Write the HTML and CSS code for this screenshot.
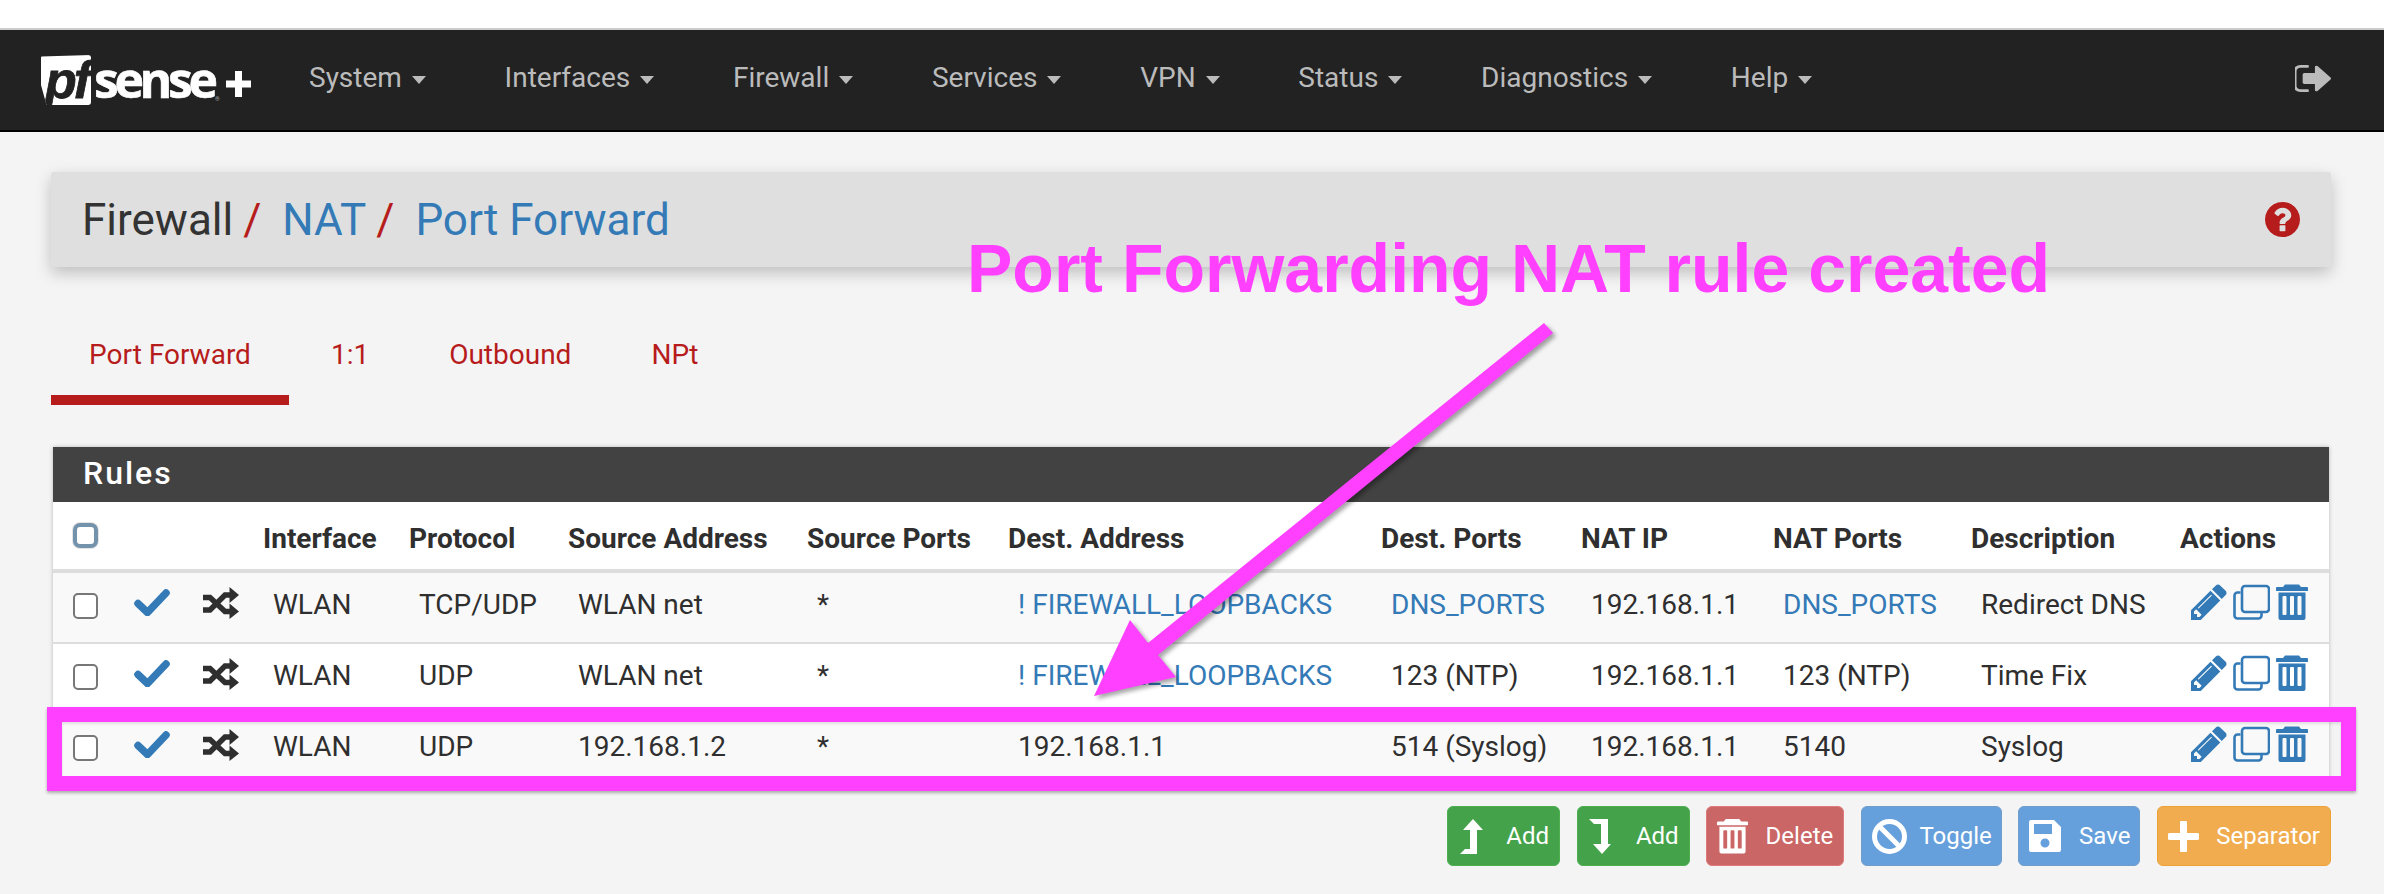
FILE: index.html
```html
<!DOCTYPE html>
<html lang="en">
<head>
<meta charset="utf-8">
<title>Firewall / NAT / Port Forward</title>
<link rel="stylesheet" href="styles.css">
</head>
<body>
<svg width="0" height="0" class="defs">
  <symbol id="i-shuffle" viewBox="0 0 36 32"><path d="M0 10.500h7L22 24.500h6M0 23h7L22 8h6" fill="none" stroke="currentColor" stroke-width="5.500"/><path d="M26.500 0l9.500 8-9.500 8zM26.500 16.500l9.500 8-9.500 7.500z" fill="currentColor"/></symbol>
  <symbol id="i-pencil" viewBox="128 128 1536 1536"><path d="M491 1536l91-91-235-235-91 91v107h128v128h107zm523-928q0-22-22-22-10 0-17 7l-542 542q-7 7-7 17 0 22 22 22 10 0 17-7l542-542q7-7 7-17zm-54-192l416 416-832 832h-416v-416zm683 96q0 53-37 90l-166 166-416-416 166-165q36-38 90-38 53 0 91 38l235 234q37 39 37 91z"/></symbol>
  <symbol id="i-trash" viewBox="0 0 32 36"><path fill-rule="evenodd" d="M9 0.500h14l2 2.500h6a1 1 0 0 1 1 1v2.500a.5.5 0 0 1-.5.5h-31a.5.5 0 0 1-.5-.5v-2.500a1 1 0 0 1 1-1h6zM2.500 8.500h27v25.500a2 2 0 0 1-2 2h-23a2 2 0 0 1-2-2zM6.500 13v17a1 1 0 0 0 1 1h2a1 1 0 0 0 1-1v-17a1 1 0 0 0-1-1h-2a1 1 0 0 0-1 1zM14 13v17a1 1 0 0 0 1 1h2a1 1 0 0 0 1-1v-17a1 1 0 0 0-1-1h-2a1 1 0 0 0-1 1zM21.500 13v17a1 1 0 0 0 1 1h2a1 1 0 0 0 1-1v-17a1 1 0 0 0-1-1h-2a1 1 0 0 0-1 1z"/></symbol>
  <symbol id="i-clone" viewBox="0 0 37 36"><path d="M12 2h21a3 3 0 0 1 3 3v20a3 3 0 0 1-3 3h-21a3 3 0 0 1-3-3v-20a3 3 0 0 1 3-3z" fill="none" stroke="currentColor" stroke-width="2.6"/><path d="M7.500 8.500h-3a3 3 0 0 0-3 3v20a3 3 0 0 0 3 3h21a3 3 0 0 0 3-3v-2.500" fill="none" stroke="currentColor" stroke-width="2.600"/></symbol>
  <symbol id="i-check" viewBox="0 0 36 27"><path d="M4 14.500l9.500 9L32 4" fill="none" stroke="currentColor" stroke-width="7.500" stroke-linejoin="round" stroke-linecap="round"/></symbol>
</svg>

<div class="topstrip"></div>

<nav class="navbar">
  <a class="logo" href="#">
    <span class="logo-pf">pf</span><span class="logo-sense">sense</span><span class="logo-reg">®</span>
    <svg class="logo-plus" viewBox="0 0 25 26"><path d="M9 0h7v9.500h9v7h-9v9.500h-7v-9.500h-9v-7h9z"/></svg>
  </a>
  <ul class="menu">
    <li class="menu-item">System<span class="caret"></span></li>
    <li class="menu-item">Interfaces<span class="caret"></span></li>
    <li class="menu-item">Firewall<span class="caret"></span></li>
    <li class="menu-item">Services<span class="caret"></span></li>
    <li class="menu-item">VPN<span class="caret"></span></li>
    <li class="menu-item">Status<span class="caret"></span></li>
    <li class="menu-item">Diagnostics<span class="caret"></span></li>
    <li class="menu-item">Help<span class="caret"></span></li>
  </ul>
  <svg class="logout" viewBox="128 256 1504 1280" preserveAspectRatio="none"><path d="M704 1440q0 4 1 20t.5 26.500-3 23.500-10 19.500-20.500 6.500h-320q-119 0-203.500-84.500t-84.500-203.500v-704q0-119 84.500-203.500t203.500-84.500h320q13 0 22.500 9.500t9.500 22.500q0 4 1 20t.5 26.500-3 23.500-10 19.500-20.500 6.500h-320q-66 0-113 47t-47 113v704q0 66 47 113t113 47h312l11.500 1 11.500 3 8 5.500 7 9 2 13.500zm928-544q0 26-19 45l-544 544q-19 19-45 19t-45-19-19-45v-288h-448q-26 0-45-19t-19-45v-384q0-26 19-45t45-19h448v-288q0-26 19-45t45-19 45 19l544 544q19 19 19 45z"/></svg>
</nav>

<main class="content">
  <header class="crumbs">
    <h1 class="crumb-line">
      <span>Firewall</span><span class="crumb-sep">/</span>
      <a class="crumb-link" href="#">NAT</a><span class="crumb-sep">/</span>
      <a class="crumb-link" href="#">Port Forward</a>
    </h1>
    <svg class="help" viewBox="128 128 1536 1536"><path d="M1024 1376v-192q0-14-9-23t-23-9h-192q-14 0-23 9t-9 23v192q0 14 9 23t23 9h192q14 0 23-9t9-23zm256-672q0-88-55.500-163t-138.500-116-170-41q-243 0-371 213-15 24 8 42l132 100q7 6 19 6 16 0 25-12 53-68 86-92 34-24 86-24 48 0 85.500 26t37.500 59q0 38-20 61t-68 45q-63 28-115.500 86.500t-52.500 125.500v36q0 14 9 23t23 9h192q14 0 23-9t9-23q0-19 21.500-49.500t54.500-49.500q32-18 49-28.500t46-35 44.500-48 28-60.500 12.500-81zm384 192q0 209-103 385.500t-279.500 279.500-385.500 103-385.500-103-279.500-279.500-103-385.500 103-385.500 279.500-279.500 385.500-103 385.500 103 279.500 279.500 103 385.500z"/></svg>
  </header>

  <ul class="tabs">
    <li class="tab tab-active">Port Forward</li>
    <li class="tab">1:1</li>
    <li class="tab">Outbound</li>
    <li class="tab">NPt</li>
  </ul>

  <section class="panel">
    <h2 class="panel-title">Rules</h2>
    <table class="rules">
      <colgroup>
        <col class="w-cb"><col class="w-chk"><col class="w-shf"><col class="w-if"><col class="w-pr"><col class="w-sa"><col class="w-sp"><col class="w-da"><col class="w-dp"><col class="w-ni"><col class="w-np"><col class="w-de"><col class="w-ac">
      </colgroup>
      <thead>
        <tr>
          <th class="cell-box"><input type="checkbox" class="cb cb-focus" aria-label="Select all"></th>
          <th></th><th></th>
          <th>Interface</th><th>Protocol</th><th>Source Address</th><th>Source Ports</th><th>Dest. Address</th><th>Dest. Ports</th><th>NAT IP</th><th>NAT Ports</th><th>Description</th><th>Actions</th>
        </tr>
      </thead>
      <tbody>
        <tr>
          <td class="cell-box"><input type="checkbox" class="cb" aria-label="Select"></td>
          <td class="cell-check"><svg class="ic-check"><use href="#i-check"/></svg></td>
          <td class="cell-shuffle"><svg class="ic-shuffle"><use href="#i-shuffle"/></svg></td>
          <td>WLAN</td><td>TCP/UDP</td><td>WLAN net</td><td>*</td>
          <td><a href="#">! FIREWALL_LOOPBACKS</a></td>
          <td><a href="#">DNS_PORTS</a></td>
          <td>192.168.1.1</td>
          <td><a href="#">DNS_PORTS</a></td>
          <td>Redirect DNS</td>
          <td class="cell-actions"><div class="actions"><svg class="ic-pencil"><use href="#i-pencil"/></svg><svg class="ic-clone"><use href="#i-clone"/></svg><svg class="ic-trash"><use href="#i-trash"/></svg></div></td>
        </tr>
        <tr>
          <td class="cell-box"><input type="checkbox" class="cb" aria-label="Select"></td>
          <td class="cell-check"><svg class="ic-check"><use href="#i-check"/></svg></td>
          <td class="cell-shuffle"><svg class="ic-shuffle"><use href="#i-shuffle"/></svg></td>
          <td>WLAN</td><td>UDP</td><td>WLAN net</td><td>*</td>
          <td><a href="#">! FIREWALL_LOOPBACKS</a></td>
          <td>123 (NTP)</td>
          <td>192.168.1.1</td>
          <td>123 (NTP)</td>
          <td>Time Fix</td>
          <td class="cell-actions"><div class="actions"><svg class="ic-pencil"><use href="#i-pencil"/></svg><svg class="ic-clone"><use href="#i-clone"/></svg><svg class="ic-trash"><use href="#i-trash"/></svg></div></td>
        </tr>
        <tr>
          <td class="cell-box"><input type="checkbox" class="cb" aria-label="Select"></td>
          <td class="cell-check"><svg class="ic-check"><use href="#i-check"/></svg></td>
          <td class="cell-shuffle"><svg class="ic-shuffle"><use href="#i-shuffle"/></svg></td>
          <td>WLAN</td><td>UDP</td><td>192.168.1.2</td><td>*</td>
          <td>192.168.1.1</td>
          <td>514 (Syslog)</td>
          <td>192.168.1.1</td>
          <td>5140</td>
          <td>Syslog</td>
          <td class="cell-actions"><div class="actions"><svg class="ic-pencil"><use href="#i-pencil"/></svg><svg class="ic-clone"><use href="#i-clone"/></svg><svg class="ic-trash"><use href="#i-trash"/></svg></div></td>
        </tr>
      </tbody>
    </table>
  </section>

  <div class="toolbar">
    <button class="btn btn-green btn-add">
      <svg class="bi-up" viewBox="0 0 28 38"><path d="M15 2l10 11h-6v24h-17l5-5h5v-19h-7z"/></svg>Add</button>
    <button class="btn btn-green btn-add">
      <svg class="bi-down" viewBox="0 0 24 37"><path d="M1 1h19v25h3l-9 10-9-10h8v-20h-7z"/></svg>Add</button>
    <button class="btn btn-red btn-delete">
      <svg class="bi-trash"><use href="#i-trash"/></svg>Delete</button>
    <button class="btn btn-blue btn-toggle">
      <svg class="bi-ban" viewBox="0 0 35 35"><circle cx="17.500" cy="17.500" r="15" fill="none" stroke="currentColor" stroke-width="5"/><path d="M7 7l21 21" stroke="currentColor" stroke-width="5"/></svg>Toggle</button>
    <button class="btn btn-blue btn-save">
      <svg class="bi-save" viewBox="0 0 32 32"><path fill-rule="evenodd" d="M2 0h23l7 7v23a2 2 0 0 1-2 2h-28a2 2 0 0 1-2-2v-28a2 2 0 0 1 2-2zM5 4v10h18v-10zM16 18.500a4.500 4.500 0 1 0 0 9 4.500 4.500 0 0 0 0-9z"/></svg>Save</button>
    <button class="btn btn-orange btn-sep">
      <svg class="bi-plus" viewBox="0 0 31 31"><path d="M12 2a3 3 0 0 1 7 0v10h10a3 3 0 0 1 0 7h-10v10a3 3 0 0 1-7 0v-10h-10a3 3 0 0 1 0-7h10z"/></svg>Separator</button>
  </div>
</main>

<div class="note-box"></div>
<svg class="note-arrow" viewBox="0 0 2384 894"><polygon points="1544,323 1553,333 1158,655 1176,677 1094,696 1130,620 1148,643"/></svg>
<div class="note-title">Port Forwarding NAT rule created</div>
</body>
</html>
```

FILE: styles.css
```css
* { box-sizing: border-box; }
html, body { margin: 0; padding: 0; }
body {
  position: relative;
  height: 894px;
  overflow: hidden;
  background: #f4f4f4;
  color: #2f2f2f;
  font-family: Roboto, "Liberation Sans", sans-serif;
  font-size: 28px;
}
a { color: #337ab7; text-decoration: none; }
ul { list-style: none; margin: 0; padding: 0; }
.defs { position: absolute; }

.topstrip { height: 30px; background: #fff; border-bottom: 2px solid #ccc; }

.navbar {
  display: flex;
  align-items: center;
  height: 102px;
  padding: 0 53px 4px 41px;
  background: #222;
  border-bottom: 2px solid #000;
}
.logo { position: relative; display: flex; align-items: center; width: 210px; height: 50px; flex: none; margin-top: 4px; }
.logo-pf {
  display: block;
  flex: none;
  width: 50px;
  height: 50px;
  background: #fff;
  color: #222;
  font: italic 700 52px/50px "Liberation Sans", sans-serif;
  -webkit-text-stroke: .8px #222;
  letter-spacing: -3px;
  padding-left: 4px;
  border-radius: 3px;
  clip-path: polygon(0 3%, 100% 0, 100% 100%, 11% 100%, 0 60%);
}
.logo-sense {
  margin-left: 3px;
  color: #fff;
  font: 700 50px/50px "Open Sans", sans-serif;
  -webkit-text-stroke: .6px #fff;
  letter-spacing: -4.400px;
  margin-top: -2px;
}
.logo-reg { position: absolute; left: 174px; top: 40px; font-size: 6px; line-height: 8px; color: #aaa; }
.logo-plus { position: absolute; left: 185px; top: 16px; width: 25px; height: 26px; fill: #fff; }

.menu { display: flex; gap: 78.700px; margin-left: 58px; flex: 1; }
.menu-item { display: flex; align-items: center; color: #bbb; font-size: 28px; line-height: 36px; }
.caret {
  width: 0;
  height: 0;
  margin-left: 10px;
  margin-top: 3px;
  border-left: 7.500px solid transparent;
  border-right: 7.500px solid transparent;
  border-top: 8px solid #bbb;
}
.logout { width: 36px; height: 27px; fill: #bbb; flex: none; }

.content { padding: 40px 53px 0 51px; }

.crumbs {
  display: flex;
  align-items: center;
  justify-content: space-between;
  height: 95px;
  padding: 0 31px 0 31px;
  background: #dfdfdf;
  border-radius: 3px;
  box-shadow: 0 6px 16px rgba(0, 0, 0, .22);
}
.crumb-line { margin: 0; font-size: 44px; font-weight: 400; line-height: 50px; white-space: nowrap; color: #333; }
.crumb-sep { color: #b71c1c; margin: 0 3px 0 10px; }
.crumb-link { color: #337ab7; margin-left: 7px; }
.help { width: 35px; height: 35px; fill: #b71c1c; flex: none; }

.tabs { display: flex; gap: 4px; margin-top: 60px; height: 78px; }
.tab {
  height: 78px;
  padding: 0 38px;
  color: #b71c1c;
  font-size: 28px;
  line-height: 56px;
}
.tab-active { border-bottom: 10px solid #b71c1c; }

.panel {
  margin: 42px 2px 0;
  background: #fff;
  box-shadow: 0 0 4px rgba(0, 0, 0, .25);
}
.panel-title {
  margin: 0;
  height: 55px;
  padding-left: 30px;
  background: #424242;
  color: #fff;
  font-size: 32px;
  font-weight: 500;
  letter-spacing: 2px;
  line-height: 52px;
}

.rules { width: 100%; table-layout: fixed; border-collapse: separate; border-spacing: 0; }
.w-cb { width: 71px; } .w-chk { width: 69px; } .w-shf { width: 60px; }
.w-if { width: 146px; } .w-pr { width: 159px; } .w-sa { width: 239px; }
.w-sp { width: 201px; } .w-da { width: 373px; } .w-dp { width: 200px; }
.w-ni { width: 192px; } .w-np { width: 198px; } .w-de { width: 209px; } .w-ac { width: 159px; }

.rules th {
  height: 71px;
  padding: 5px 0 0 10px;
  border-bottom: 4px solid #ddd;
  text-align: left;
  font-size: 28px;
  font-weight: 700;
  color: #2f2f2f;
  white-space: nowrap;
  vertical-align: middle;
}
.rules td {
  height: 71px;
  padding: 13px 0 0 20px;
  border-bottom: 2px solid #ddd;
  line-height: 38px;
  vertical-align: top;
  white-space: nowrap;
  font-size: 28px;
}
.rules tbody tr:nth-child(odd) td { background: #f9f9f9; }

.rules th.cell-box { padding: 0 0 0 20px; }
.rules td.cell-box { padding: 20px 0 0 20px; line-height: 0; }
.rules td.cell-check { padding: 16px 0 0 10px; line-height: 0; }
.rules td.cell-shuffle { padding: 14px 0 0 10px; line-height: 0; }
.rules td.cell-actions { padding: 11px 0 0 21px; line-height: 0; }

.cb {
  appearance: none;
  display: block;
  width: 25px;
  height: 26px;
  margin: 0;
  background: #fff;
  border: 2px solid #777;
  border-radius: 5px;
}
.cb-focus { width: 25px; height: 25px; border: 4px solid #7393ad; border-radius: 7px; box-shadow: 0 0 0 1px #e4e4e4; }

.ic-check { width: 36px; height: 27px; color: #337ab7; }
.ic-shuffle { width: 36px; height: 32px; color: #2f2f2f; }
.actions { display: flex; gap: 6px; color: #337ab7; fill: #337ab7; }
.ic-pencil { width: 36px; height: 36px; }
.ic-clone { width: 37px; height: 36px; }
.ic-trash { width: 32px; height: 36px; }

.toolbar { display: flex; justify-content: flex-end; gap: 16.600px; margin: 20px 0 0; }
.btn {
  display: flex;
  align-items: center;
  justify-content: space-between;
  height: 60px;
  padding: 0 10px;
  border: 1px solid;
  border-radius: 6px;
  color: #fff;
  fill: #fff;
  font-family: Roboto, sans-serif;
  font-size: 24px;
}
.btn-green { background: #44a34a; border-color: #4caf50; }
.btn-red { background: #cb6666; border-color: #e07a7a; }
.btn-blue { background: #66a0dc; border-color: #6f9ecb; }
.btn-orange { background: #f0ac4e; border-color: #eea236; }
.btn-add { width: 113px; padding-right: 10px; }
.btn-delete { width: 138px; }
.btn-toggle { width: 141px; padding-right: 9px; }
.btn-save { width: 122px; padding-right: 9px; }
.btn-sep { width: 174px; }
.bi-up { width: 28px; height: 38px; }
.bi-down { width: 24px; height: 37px; }
.bi-trash { width: 31px; height: 36px; }
.bi-ban { width: 35px; height: 35px; }
.bi-save { width: 32px; height: 32px; }
.bi-plus { width: 31px; height: 31px; }

.note-box {
  position: absolute;
  left: 47px;
  top: 707px;
  width: 2309px;
  height: 84px;
  border: 15px solid #ff40ff;
  box-shadow: 0 2px 3px rgba(0, 0, 0, .3), inset 0 2px 3px rgba(0, 0, 0, .1);
}
.note-arrow {
  position: absolute;
  left: 0;
  top: 0;
  width: 2384px;
  height: 894px;
  fill: #ff40ff;
  filter: drop-shadow(3px 3px 2px rgba(0, 0, 0, .35));
}
.note-title {
  position: absolute;
  left: 967px;
  top: 234px;
  color: #ff40ff;
  font: 700 68px/68px "Liberation Sans", Arial, sans-serif;
  white-space: nowrap;
}
```
